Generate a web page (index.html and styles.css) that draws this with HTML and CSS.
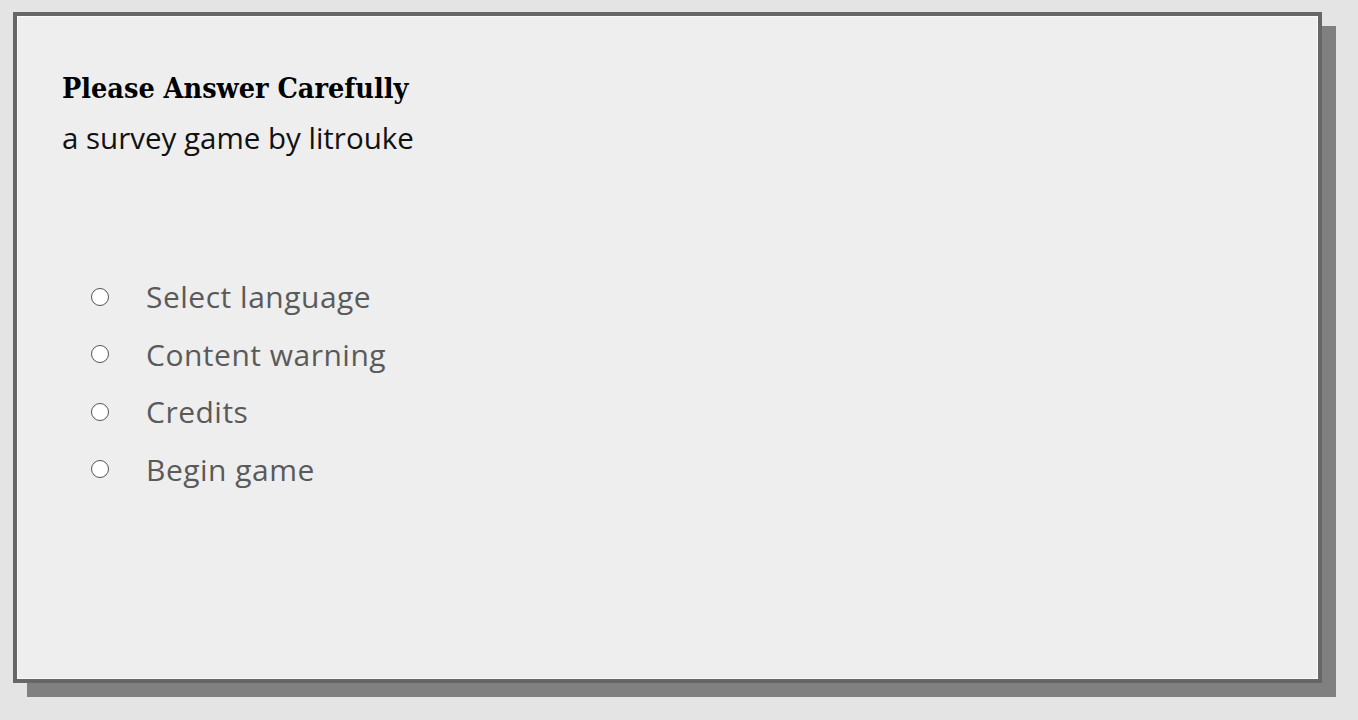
FILE: index.html
```html
<!DOCTYPE html>
<html lang="en">
<head>
    <meta charset="UTF-8">
    <meta name="viewport" content="width=device-width, initial-scale=1.0">
    <title>Please Answer Carefully</title>
    <link rel="stylesheet" href="styles.css">
</head>
<body>
    <div class="screen">
        <div class="header">
            <h1 class="title">Please Answer Carefully</h1>
            <p class="byline">a survey game by litrouke</p>
        </div>

        <ul class="menu">
            <li class="option"><span class="radio"></span><span class="label">Select language</span></li>
            <li class="option"><span class="radio"></span><span class="label">Content warning</span></li>
            <li class="option"><span class="radio"></span><span class="label">Credits</span></li>
            <li class="option"><span class="radio"></span><span class="label">Begin game</span></li>
        </ul>
    </div>
</body>
</html>
```

FILE: styles.css
```css
body {
    margin: 0;
    padding: 12px 36px 37px 13px;
    background-color: #e4e4e4;
    font-family: "Open Sans", Lato, sans-serif;
}
.screen {
    box-sizing: border-box;
    height: 671px;
    background-color: #eeeeee;
    border: 4px solid #666;
    box-shadow: inset 0 0 0 1px #fafafa, 14px 14px 0 #808080;
    padding: 52px 45px;
}
.title {
    margin: 0;
    font-family: "DejaVu Serif", serif;
    font-stretch: condensed;
    font-size: 28.5px;
    font-weight: bold;
    color: #000;
    line-height: 40px;
}
.byline {
    margin: 10px 0 0;
    font-size: 29.5px;
    color: #111;
    line-height: 40px;
}
.menu {
    list-style: none;
    margin: 110px 0 0;
    padding: 0 0 0 29px;
}
.option {
    display: flex;
    align-items: center;
    height: 57.5px;
}
.radio {
    box-sizing: border-box;
    width: 18px;
    height: 18px;
    border: 1px solid #555;
    border-radius: 50%;
    background-color: #fff;
    margin-right: 37px;
}
.label {
    font-size: 30px;
    letter-spacing: 0.5px;
    color: #5a5a5a;
}
```
